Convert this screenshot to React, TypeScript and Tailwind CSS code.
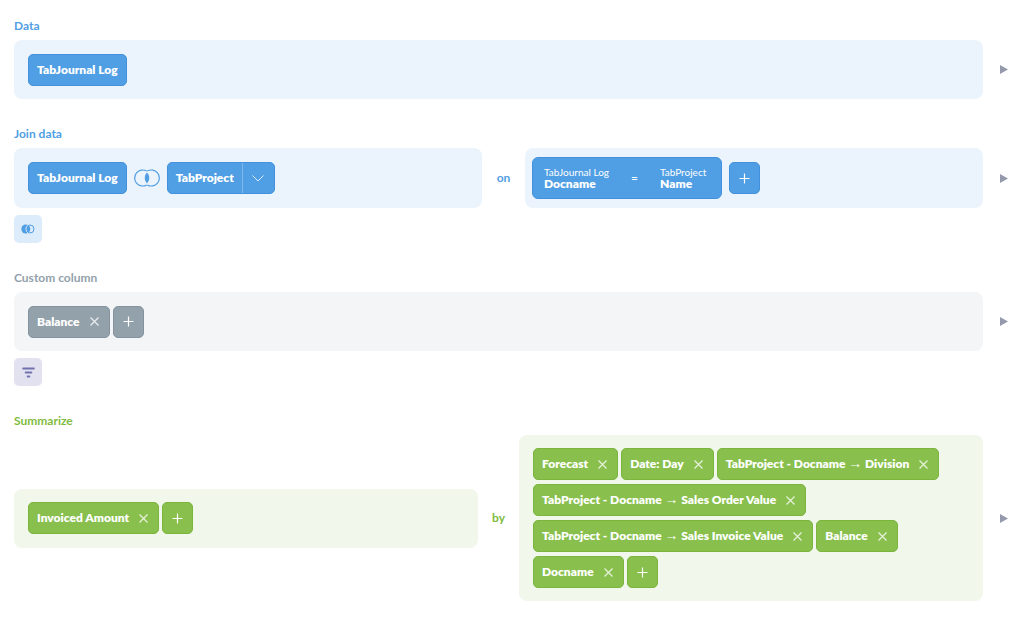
import type { ReactNode } from "react";
import clsx from "clsx";

type Tone = "blue" | "gray" | "green";

const titleTones = {
  blue: "text-[#509ee3]",
  gray: "text-[#93a1ab]",
  green: "text-[#7fbb40]",
};

const panelTones = {
  blue: "bg-[#ebf4fc]",
  gray: "bg-[#f3f5f7]",
  green: "bg-[#f1f7eb]",
};

const chipTones = {
  blue: "bg-[#509ee3] border-[#4391dc]",
  gray: "bg-[#93a1ab] border-[#84939f]",
  green: "bg-[#88bf4d] border-[#7ab53c]",
};

const CloseIcon = () => (
  <svg className="w-[9px] h-[9px]" viewBox="0 0 9 9" stroke="currentColor">
    <path d="M0.5 0.5l8 8M8.5 0.5l-8 8" strokeWidth="1.2" />
  </svg>
);

const PlusIcon = () => (
  <svg className="w-[11px] h-[11px]" viewBox="0 0 11 11" stroke="currentColor">
    <path d="M5.5 0.5v10M0.5 5.5h10" strokeWidth="1.2" />
  </svg>
);

const JoinIcon = () => (
  <svg
    className="w-[26px] h-[18px]"
    viewBox="0 0 26 18"
    fill="none"
    stroke="currentColor"
    strokeWidth="1.2"
  >
    <path d="M12.7 2.1a8 8 0 1 0 0 13.8" />
    <path d="M13.3 2.1a8 8 0 1 1 0 13.8" />
    <path
      d="M13 3.6c3 3 3 7.8 0 10.8c-3-3-3-7.8 0-10.8z"
      fill="currentColor"
      stroke="none"
    />
  </svg>
);

const LeftJoinIcon = () => (
  <svg className="w-[14px] h-[10px]" viewBox="0 0 14 10">
    <circle cx="9" cy="5" r="4" fill="none" stroke="currentColor" />
    <circle cx="4.8" cy="5" r="4.5" fill="currentColor" />
    <path
      d="M7.2 0.8a5 5 0 0 0 0 8.4"
      fill="none"
      stroke="#dcecfa"
      strokeWidth="0.9"
    />
  </svg>
);

const FilterIcon = () => (
  <svg
    className="w-[13px] h-[11px]"
    viewBox="0 0 13 11"
    stroke="currentColor"
    strokeWidth="2"
    strokeLinecap="round"
  >
    <path d="M1.2 1.5h10.6M3.7 5.5h5.6M5.7 9.5h1.6" />
  </svg>
);

const Chip = ({
  tone,
  label,
  column,
  removable,
}: {
  tone: Tone;
  label: string;
  column?: string;
  removable?: boolean;
}) => (
  <div
    className={clsx(
      "h-8 flex items-center rounded-[5px] border text-white",
      chipTones[tone]
    )}
  >
    <button
      className={clsx(
        "font-extrabold whitespace-nowrap cursor-pointer",
        removable ? "pl-2" : "px-2"
      )}
    >
      {label}
      {column && (
        <>
          {" "}
          <span className="font-['Liberation_Sans',sans-serif] font-normal text-sm leading-none">
            →
          </span>{" "}
          {column}
        </>
      )}
    </button>
    {removable && (
      <button
        aria-label={`Remove ${column ?? label}`}
        className="px-[10px] text-white/80 cursor-pointer"
      >
        <CloseIcon />
      </button>
    )}
  </div>
);

const AddButton = ({ tone }: { tone: Tone }) => (
  <button
    aria-label="Add"
    className={clsx(
      "w-[31px] h-8 flex items-center justify-center rounded-[5px] border text-white cursor-pointer",
      chipTones[tone]
    )}
  >
    <PlusIcon />
  </button>
);

const Panel = ({
  tone,
  className = "px-[14px] py-[13px]",
  children,
}: {
  tone: Tone;
  className?: string;
  children: ReactNode;
}) => (
  <div
    className={clsx(
      "min-h-[59px] flex flex-wrap items-center gap-x-[3px] gap-y-1 rounded-lg",
      panelTones[tone],
      className
    )}
  >
    {children}
  </div>
);

const Step = ({
  tone,
  title,
  children,
  action,
}: {
  tone: Tone;
  title: string;
  children: ReactNode;
  action?: ReactNode;
}) => (
  <section className="mb-[25px]">
    <h2 className={clsx("mb-1 font-bold", titleTones[tone])}>{title}</h2>
    <div className="flex items-center">
      <div className="flex-1 min-w-0">{children}</div>
      <button
        aria-label={`Preview ${title}`}
        className="w-[41px] flex justify-center text-[#949aab] cursor-pointer"
      >
        <svg className="w-2 h-[9px]" viewBox="0 0 8 9" fill="currentColor">
          <path d="M0 0l8 4.5l-8 4.5z" />
        </svg>
      </button>
    </div>
    {action}
  </section>
);

const groupings = [
  { label: "Forecast" },
  { label: "Date: Day" },
  { label: "TabProject - Docname", column: "Division" },
  { label: "TabProject - Docname", column: "Sales Order Value" },
  { label: "TabProject - Docname", column: "Sales Invoice Value" },
  { label: "Balance" },
  { label: "Docname" },
];

const App = () => {
  return (
    <main className="min-h-screen bg-white pt-4 pl-[14px] font-['Lato','Noto_Sans',sans-serif] text-[12px] leading-5">
      <Step tone="blue" title="Data">
        <Panel tone="blue">
          <Chip tone="blue" label="TabJournal Log" />
        </Panel>
      </Step>

      <Step
        tone="blue"
        title="Join data"
        action={
          <button
            aria-label="Join data"
            className="mt-[7px] w-7 h-7 flex items-center justify-center rounded-[5px] bg-[#dcecfa] text-[#509ee3] cursor-pointer"
          >
            <LeftJoinIcon />
          </button>
        }
      >
        <div className="grid grid-cols-[468fr_43px_458fr] items-stretch">
          <Panel tone="blue" className="px-[14px] py-[9px]">
            <Chip tone="blue" label="TabJournal Log" />
            <button
              aria-label="Change join type"
              className="px-1 text-[#509ee3] cursor-pointer"
            >
              <JoinIcon />
            </button>
            <div className="h-8 flex items-stretch rounded-[5px] border border-[#4391dc] bg-[#509ee3] text-white">
              <button className="px-2 font-extrabold cursor-pointer">
                TabProject
              </button>
              <button
                aria-label="Pick columns"
                className="w-8 flex items-center justify-center border-l border-[#7fb8ea] cursor-pointer"
              >
                <svg
                  className="w-3 h-[7px]"
                  viewBox="0 0 12 7"
                  fill="none"
                  stroke="currentColor"
                >
                  <path d="M0.5 0.5l5.5 5.5l5.5-5.5" opacity="0.8" />
                </svg>
              </button>
            </div>
          </Panel>
          <span className="self-center text-center font-bold text-[#509ee3]">
            on
          </span>
          <Panel tone="blue" className="px-[7px] py-[9px]">
            <div className="h-[42px] mr-1 px-[11px] flex items-center rounded-md border border-[#4391dc] bg-[#509ee3] text-white">
              <button className="text-left cursor-pointer">
                <span className="block text-[10px] leading-3">
                  TabJournal Log
                </span>
                <span className="block font-extrabold leading-3">Docname</span>
              </button>
              <span className="px-[22px]">=</span>
              <button className="pr-1 text-left cursor-pointer">
                <span className="block text-[10px] leading-3">TabProject</span>
                <span className="block font-extrabold leading-3">Name</span>
              </button>
            </div>
            <AddButton tone="blue" />
          </Panel>
        </div>
      </Step>

      <Step
        tone="gray"
        title="Custom column"
        action={
          <button
            aria-label="Filter"
            className="mt-[7px] w-7 h-7 flex items-center justify-center rounded-[5px] bg-[#e2e1f0] text-[#7172ad] cursor-pointer"
          >
            <FilterIcon />
          </button>
        }
      >
        <Panel tone="gray">
          <Chip tone="gray" label="Balance" removable />
          <AddButton tone="gray" />
        </Panel>
      </Step>

      <Step tone="green" title="Summarize">
        <div className="grid grid-cols-[1fr_41px_1fr] items-center">
          <Panel tone="green">
            <Chip tone="green" label="Invoiced Amount" removable />
            <AddButton tone="green" />
          </Panel>
          <span className="text-center font-bold text-[#7fbb40]">by</span>
          <Panel tone="green">
            {groupings.map(({ label, column }) => (
              <Chip
                key={label + column}
                tone="green"
                label={label}
                column={column}
                removable
              />
            ))}
            <AddButton tone="green" />
          </Panel>
        </div>
      </Step>
    </main>
  );
};

export default App;
